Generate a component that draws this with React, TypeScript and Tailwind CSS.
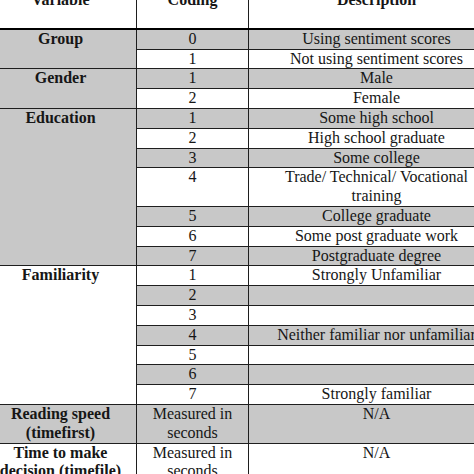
const GRAY = "bg-[#c8c8c8]";

type Row = { code: React.ReactNode; desc: React.ReactNode; gray: boolean };
type Group = { name: React.ReactNode; gray: boolean; rows: Row[] };

const groups: Group[] = [
  {
    name: "Group",
    gray: true,
    rows: [
      { code: "0", desc: "Using sentiment scores", gray: true },
      { code: "1", desc: "Not using sentiment scores", gray: false },
    ],
  },
  {
    name: "Gender",
    gray: true,
    rows: [
      { code: "1", desc: "Male", gray: true },
      { code: "2", desc: "Female", gray: false },
    ],
  },
  {
    name: "Education",
    gray: true,
    rows: [
      { code: "1", desc: "Some high school", gray: true },
      { code: "2", desc: "High school graduate", gray: false },
      { code: "3", desc: "Some college", gray: true },
      {
        code: "4",
        desc: (
          <>
            Trade/ Technical/ Vocational
            <br />
            training
          </>
        ),
        gray: false,
      },
      { code: "5", desc: "College graduate", gray: true },
      { code: "6", desc: "Some post graduate work", gray: false },
      { code: "7", desc: "Postgraduate degree", gray: true },
    ],
  },
  {
    name: "Familiarity",
    gray: false,
    rows: [
      { code: "1", desc: "Strongly Unfamiliar", gray: false },
      { code: "2", desc: "", gray: true },
      { code: "3", desc: "", gray: false },
      { code: "4", desc: "Neither familiar nor unfamiliar", gray: true },
      { code: "5", desc: "", gray: false },
      { code: "6", desc: "", gray: true },
      { code: "7", desc: "Strongly familiar", gray: false },
    ],
  },
  {
    name: (
      <>
        Reading speed
        <br />
        (timefirst)
      </>
    ),
    gray: true,
    rows: [
      {
        code: (
          <>
            Measured in
            <br />
            seconds
          </>
        ),
        desc: "N/A",
        gray: true,
      },
    ],
  },
  {
    name: (
      <>
        Time to make
        <br />
        decision (timefile)
      </>
    ),
    gray: false,
    rows: [
      {
        code: (
          <>
            Measured in
            <br />
            seconds
          </>
        ),
        desc: "N/A",
        gray: false,
      },
    ],
  },
];

// tables don't always inherit fonts, so every cell gets its own
const text = "[font-family:'Liberation_Serif','Times_New_Roman',serif] text-[16px] leading-[18.8px] text-[#161616]";
const cell = `border border-[#1e1e1e] align-top text-center px-1 py-0 whitespace-nowrap ${text}`;

export default function App() {
  return (
    <div className="w-[474px] h-[474px] overflow-hidden bg-white">
      <table className="-mt-[16px] -ml-[16px] w-[520px] table-fixed border-collapse">
        <colgroup>
          <col className="w-[152px]" />
          <col className="w-[112px]" />
          <col className="w-[256px]" />
        </colgroup>
        <thead>
          <tr>
            {["Variable", "Coding", "Description"].map((h) => (
              <th
                key={h}
                className={`border border-[#1e1e1e] border-b-2 border-b-black align-top text-center font-bold pt-[6px] pb-[18px] ${text}`}
              >
                {h}
              </th>
            ))}
          </tr>
        </thead>
        <tbody>
          {groups.map((g, gi) =>
            g.rows.map((r, ri) => (
              <tr key={`${gi}-${ri}`}>
                {ri === 0 && (
                  <td
                    rowSpan={g.rows.length}
                    className={`${cell} font-bold ${g.gray ? GRAY : "bg-white"}`}
                  >
                    {g.name}
                  </td>
                )}
                <td className={`${cell} ${r.gray ? GRAY : "bg-white"}`}>{r.code}</td>
                <td className={`${cell} ${r.gray ? GRAY : "bg-white"}`}>
                  {r.desc || "\u00a0"}
                </td>
              </tr>
            ))
          )}
        </tbody>
      </table>
    </div>
  );
}
